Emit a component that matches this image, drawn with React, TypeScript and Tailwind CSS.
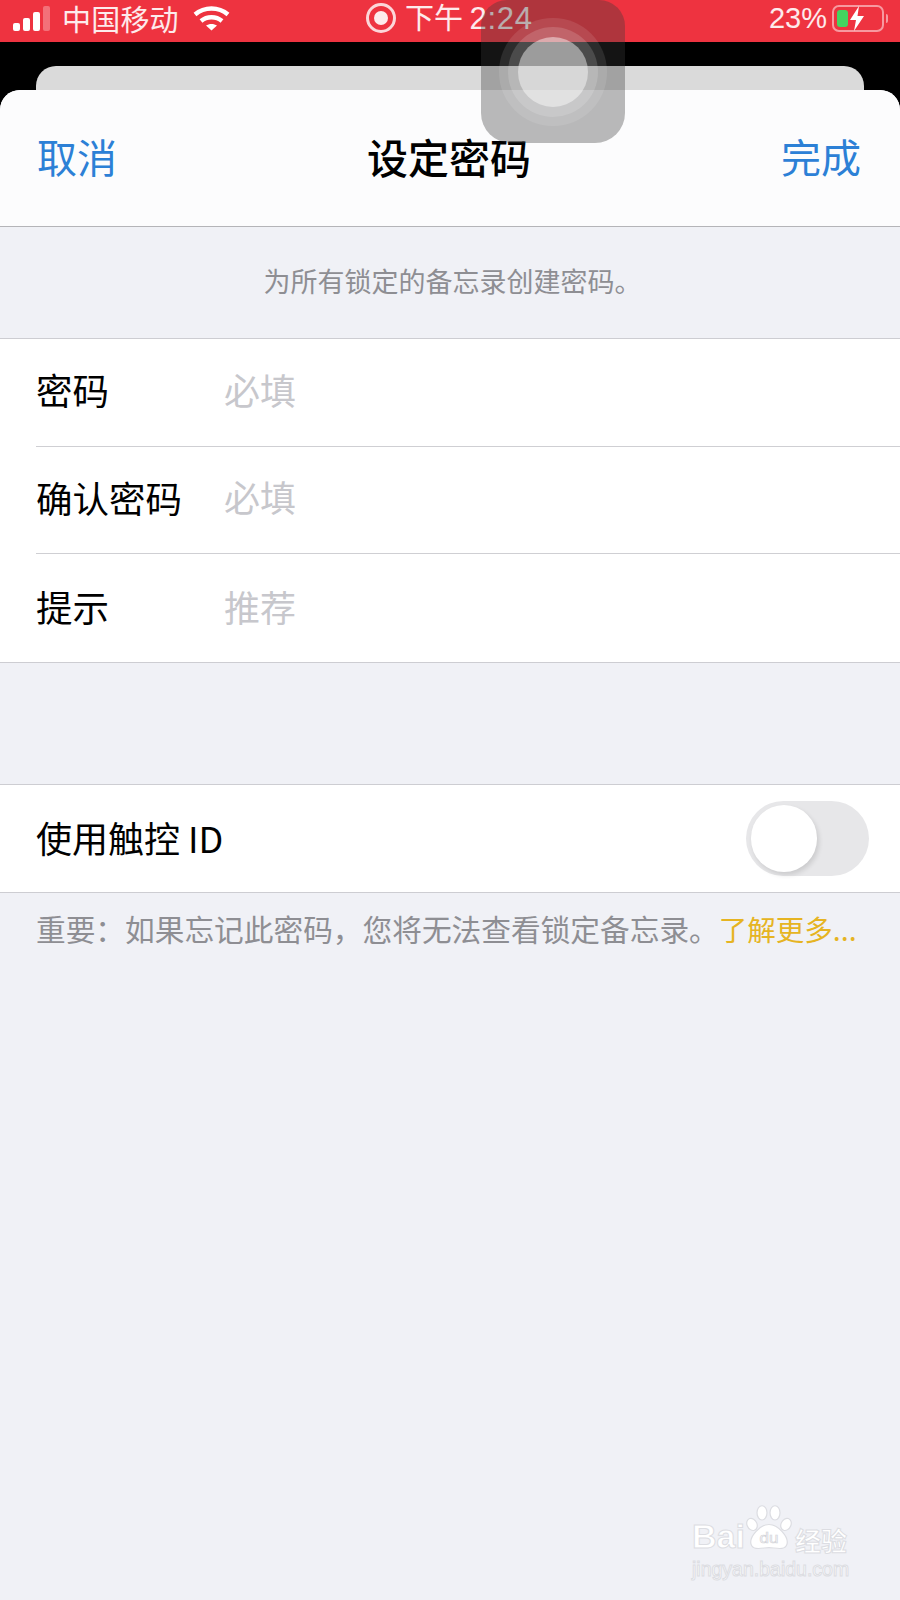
import { useState } from "react";

const CJK = "font-['Noto_Sans_CJK_SC','Noto_Sans',sans-serif]";

function SignalBars() {
  return (
    <div className="flex items-end gap-[3px]">
      <span className="w-[7px] h-[8px] rounded-[2px] bg-white" />
      <span className="w-[7px] h-[13px] rounded-[2px] bg-white" />
      <span className="w-[7px] h-[19px] rounded-[2px] bg-white" />
      <span className="w-[7px] h-[25px] rounded-[2px] bg-white/30" />
    </div>
  );
}

function WifiIcon() {
  return (
    <svg width="37" height="25" viewBox="0 0 37 25" fill="none" stroke="white" strokeWidth="4.4">
      <path d="M2 8.5C11.5 0.5 25.5 0.5 35 8.5" />
      <path d="M8 15C14 10 23 10 29 15" />
      <path d="M18.5 24.5L13 19.6C16 17.3 21 17.3 24 19.6Z" fill="white" stroke="none" />
    </svg>
  );
}

function RecordIcon() {
  return (
    <div className="w-[30px] h-[30px] rounded-full border-[3px] border-white/80 flex items-center justify-center">
      <span className="w-[14px] h-[14px] rounded-full bg-white/90" />
    </div>
  );
}

function Battery() {
  return (
    <div className="flex items-center gap-[2px]">
      <div className="relative w-[52px] h-[27px] rounded-[7px] border-2 border-white/50 p-[3px]">
        <span className="block w-[11px] h-full rounded-[3px] bg-[#45d35f]" />
        <svg className="absolute left-[15px] top-[-2px]" width="16" height="27" viewBox="0 0 16 27">
          <path d="M10 1L1 15H7L5 26L15 11H8.500Z" fill="white" />
        </svg>
      </div>
      <span className="w-[2px] h-[9px] rounded-r-sm bg-white/50" />
    </div>
  );
}

function StatusBar() {
  return (
    <div className="h-[42px] shrink-0 bg-[#ee3340] pl-[13px] pr-[12px] pb-[6px] flex items-center justify-between text-white/90">
      <div className="w-[300px] flex items-center">
        <SignalBars />
        <span className="ml-[12px] text-[29px] leading-none tracking-[0.2px]">中国移动</span>
        <div className="ml-[14px]">
          <WifiIcon />
        </div>
      </div>
      <div className="flex items-center gap-[9px] ml-[53px]">
        <RecordIcon />
        <span className="text-[29px] leading-none whitespace-nowrap">
          下午 <span className="text-[31px] tracking-[0.7px] font-['Liberation_Sans',sans-serif]">2:24</span>
        </span>
      </div>
      <div className="flex items-center gap-[5px] ml-auto">
        <span className="text-[29px] leading-none font-['Liberation_Sans',sans-serif]">23%</span>
        <Battery />
      </div>
    </div>
  );
}

function FormRow({ label, hint, last }: { label: string; hint: string; last?: boolean }) {
  return (
    <div className="pl-[36px]">
      <div className={`h-[107.500px] flex items-center ${last ? "" : "border-b border-[#cfcfd3]"}`}>
        <span className={`w-[188px] text-[36.500px] leading-none text-black ${last ? "mb-[2px]" : "mb-[4px]"}`}>{label}</span>
        <span className={`text-[36px] leading-none text-[#c7c7cc] ${last ? "mb-[3px]" : "mb-[7px]"}`}>{hint}</span>
      </div>
    </div>
  );
}

function Toggle() {
  const [on, setOn] = useState(false);
  return (
    <button
      onClick={() => setOn(!on)}
      className="w-[123px] h-[75px] rounded-full bg-[#e7e7e9] flex items-center"
    >
      <span className="w-[66px] h-[67px] ml-[5px] rounded-full bg-white shadow-[2px_3px_5px_rgba(0,0,0,0.12)]" />
    </button>
  );
}

function AssistiveTouch() {
  return (
    <div className="absolute left-[481px] top-0 w-[144px] h-[143px] rounded-b-[30px] rounded-t-[26px] bg-[#3a3a3a]/35 flex items-center justify-center">
      <div className="w-[108px] h-[108px] rounded-full bg-white/10 flex items-center justify-center">
        <div className="w-[90px] h-[90px] rounded-full bg-white/15 flex items-center justify-center">
          <div className="w-[70px] h-[70px] rounded-full bg-white/45" />
        </div>
      </div>
    </div>
  );
}

function Watermark() {
  const outline = "text-white [-webkit-text-stroke:1px_#dcdde2] font-['Liberation_Sans',sans-serif]";
  return (
    <div className="absolute left-[692px] top-[1503px] w-[170px]">
      <div className="flex items-end h-[50px]">
        <span className={`${outline} w-[53px] text-[34px] font-bold leading-none`}>Bai</span>
        <svg width="48" height="50" viewBox="0 0 48 56" preserveAspectRatio="none" className="shrink-0">
          <g fill="white" stroke="#dcdde2" strokeWidth="1.2">
            <ellipse cx="7" cy="24" rx="5" ry="7" transform="rotate(-20 7 24)" />
            <ellipse cx="17" cy="11" rx="5" ry="8" />
            <ellipse cx="30" cy="11" rx="5" ry="8" />
            <ellipse cx="41" cy="24" rx="5" ry="7" transform="rotate(20 41 24)" />
            <path d="M24 24C33 24 44 38 42 46C40 54 30 50 24 50C18 50 8 54 6 46C4 38 15 24 24 24Z" />
          </g>
          <text x="24" y="45" textAnchor="middle" fontSize="17" fontFamily="Liberation Sans" fill="white" stroke="#d4d5da" strokeWidth="0.8">du</text>
        </svg>
        <span className="text-white [-webkit-text-stroke:1px_#dcdde2] text-[26px] font-bold leading-none ml-[2px] whitespace-nowrap">经验</span>
      </div>
      <div className={`${outline} text-[19.500px] leading-none mt-[7px] whitespace-nowrap`}>
        jingyan.baidu.com
      </div>
    </div>
  );
}

export default function App() {
  return (
    <div className={`${CJK} relative w-[900px] h-[1600px] overflow-hidden flex flex-col bg-black`}>
      <StatusBar />

      {/* card stack behind the sheet */}
      <div className="h-[48px] shrink-0 pt-[24px] px-[36px]">
        <div className="h-[24px] rounded-t-[20px] bg-[#dadada]" />
      </div>

      <div className="flex-1 rounded-t-[20px] overflow-hidden bg-[#f0f1f6] flex flex-col">
        <div className="h-[137px] shrink-0 bg-[#fcfcfd] border-b border-[#b4b4b8] pl-[37px] pr-[39px] pb-[4px] flex items-center justify-between text-[40px] leading-none">
          <span className="text-[#2c80d6]">取消</span>
          <span className="text-black font-medium text-[41px]">设定密码</span>
          <span className="text-[#2c80d6]">完成</span>
        </div>

        <div className="h-[111px] shrink-0 flex items-center justify-center text-[27px] leading-none text-[#8e8e93] pl-[5px] pb-[4px]">
          为所有锁定的备忘录创建密码。
        </div>

        <div className="shrink-0 bg-white border-y border-[#cdcdd2]">
          <FormRow label="密码" hint="必填" />
          <FormRow label="确认密码" hint="必填" />
          <FormRow label="提示" hint="推荐" last />
        </div>

        <div className="h-[121px] shrink-0" />

        <div className="h-[109px] shrink-0 bg-white border-y border-[#cdcdd2] pl-[36px] pr-[31px] flex items-center justify-between">
          <span className="text-[36px] leading-none text-black mb-[2px]">使用触控 ID</span>
          <Toggle />
        </div>

        <div className="pt-[17px] pl-[36px] text-[29.700px] leading-[38px] text-[#8e8e93] whitespace-nowrap">
          重要：如果忘记此密码，您将无法查看锁定备忘录。
          <span className="text-[28.500px] text-[#e6b422]">了解更多...</span>
        </div>
      </div>

      <AssistiveTouch />
      <Watermark />
    </div>
  );
}
